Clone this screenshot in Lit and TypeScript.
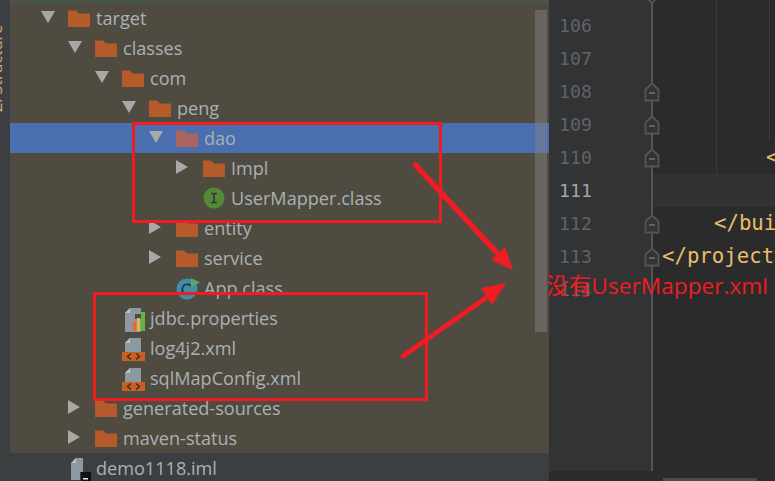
import { LitElement, html, css, svg } from "lit";
import { customElement } from "lit/decorators.js";

type Kind = "folder" | "iface" | "cls" | "props" | "xml" | "iml";
interface Node { name: string; depth: number; kind: Kind; arrow?: "open" | "closed"; selected?: boolean; plain?: boolean }

const TREE: Node[] = [
  { name: "target", depth: 0, kind: "folder", arrow: "open" },
  { name: "classes", depth: 1, kind: "folder", arrow: "open" },
  { name: "com", depth: 2, kind: "folder", arrow: "open" },
  { name: "peng", depth: 3, kind: "folder", arrow: "open" },
  { name: "dao", depth: 4, kind: "folder", arrow: "open", selected: true },
  { name: "Impl", depth: 5, kind: "folder", arrow: "closed" },
  { name: "UserMapper.class", depth: 5, kind: "iface" },
  { name: "entity", depth: 4, kind: "folder", arrow: "closed" },
  { name: "service", depth: 4, kind: "folder", arrow: "closed" },
  { name: "App.class", depth: 4, kind: "cls" },
  { name: "jdbc.properties", depth: 2, kind: "props" },
  { name: "log4j2.xml", depth: 2, kind: "xml" },
  { name: "sqlMapConfig.xml", depth: 2, kind: "xml" },
  { name: "generated-sources", depth: 1, kind: "folder", arrow: "closed" },
  { name: "maven-status", depth: 1, kind: "folder", arrow: "closed" },
  { name: "demo1118.iml", depth: 0, kind: "iml", plain: true },
];

interface Line { n?: number; code?: string; pad?: number; fold?: "mark" | "end"; guides: number; current?: boolean }
const LINES: Line[] = [
  { n: 105, guides: 2, fold: "end" },
  { n: 106, guides: 2 },
  { n: 107, guides: 2 },
  { n: 108, guides: 2, fold: "mark" },
  { n: 109, guides: 2, fold: "mark" },
  { n: 110, guides: 1, fold: "mark", code: "<", pad: 113 },
  { n: 111, guides: 0, current: true },
  { n: 112, guides: 0, fold: "mark", code: "</build>", pad: 61 },
  { n: 113, guides: 0, fold: "mark", code: "</project>", pad: 9 },
  { n: 114, guides: 0 },
  { guides: 0 },
  { guides: 0 },
  { guides: 0 },
  { guides: 0 },
  { guides: 0 },
];

const icon = (k: Kind) => {
  switch (k) {
    case "folder":
      return svg`<svg viewBox="0 0 22 17" width="22" height="17"><path d="M0 0.5h8l3 3h11v13.5H0z" fill="currentColor"/></svg>`;
    case "iface":
      return svg`<svg viewBox="0 0 22 22" width="22" height="22"><circle cx="11" cy="11" r="10.5" fill="#528a38"/><path d="M8 6.5h6M8 15.5h6M11 6.5v9" stroke="#2f3b2a" stroke-width="1.6" fill="none"/></svg>`;
    case "cls":
      return svg`<svg viewBox="0 0 24 24" width="24" height="24"><circle cx="11" cy="13" r="10.5" fill="#3f8fa8"/><path d="M15 10a5 5 0 1 0 0 6.5" stroke="#2b3a40" stroke-width="2" fill="none"/><path d="M15 2l9 4.5-9 4.5z" fill="#59a869"/></svg>`;
    case "props":
      return svg`<svg viewBox="0 0 23 28" width="23" height="28"><path d="M8 4h11v6h-6v18H3V9z" fill="#8d99a1"/><path d="M8 4v5H3z" fill="#b9c1c6"/><path d="M11 15h8v13h-8z" fill="#8d99a1"/><rect x="11" y="18" width="3" height="9" fill="#f26522"/><rect x="15" y="14" width="3" height="13" fill="#f4af3d"/><rect x="19" y="8" width="4" height="19" fill="#62b543"/></svg>`;
    case "xml":
      return svg`<svg viewBox="0 0 23 26" width="23" height="26"><path d="M8 3h11v14H3V8z" fill="#8d99a1"/><path d="M8 3v5H3z" fill="#b9c1c6"/><rect y="17" width="23" height="9" fill="#c75f27"/><path d="M9 18.5l-3.5 3 3.5 3M14 18.5l3.5 3-3.5 3" stroke="#3a2c20" stroke-width="1.4" fill="none"/></svg>`;
    case "iml":
      return svg`<svg viewBox="0 0 23 26" width="23" height="26"><path d="M8 3h7v14h-3v8H3V8z" fill="#8d99a1"/><path d="M8 3v5H3z" fill="#b9c1c6"/><rect x="13" y="17" width="10" height="9" fill="#111"/><rect x="15" y="23" width="5" height="1.5" fill="#eee"/></svg>`;
  }
};

@customElement("app-root")
export class AppRoot extends LitElement {
  static styles = css`
    :host { display: flex; width: 775px; height: 481px; overflow: hidden; position: relative; background: #2b2b2b; font-family: "Open Sans", "Noto Sans", sans-serif; }
    .rail { width: 10px; flex: none; background: #3c3f41; position: relative; overflow: hidden; }
    .rail span { position: absolute; left: -14px; top: 14px; writing-mode: vertical-rl; transform: rotate(180deg); font-size: 16px; line-height: 20px; color: #d6a870; white-space: nowrap; height: 98px; text-align: left; }
    .panel { width: 539px; flex: none; background: #504b40; display: flex; flex-direction: column; position: relative; }
    .strip { height: 3px; background: #485547; flex: none; }
    .row { height: 30px; flex: none; display: flex; align-items: center; font-size: 18.1px; color: #a9b1b6; white-space: nowrap; }
    .row.sel { background: #4b6eaf; }
    .row.plain { background: #3c3f41; }
    .arrow { width: 27px; flex: none; display: flex; justify-content: flex-start; color: #a8a8a8; margin-bottom: 2px; }
    .icon { width: 28px; flex: none; display: flex; align-items: center; color: #b45a2b; }
    .sel .icon { color: #a9665c; }
    .scroll { position: absolute; right: 2px; top: 10px; width: 12px; height: 322px; background: rgba(130,130,130,.5); }
    .editor { flex: 1; min-width: 0; display: flex; flex-direction: column; margin-top: -24.5px; font-family: "DejaVu Sans Mono", "Liberation Mono", monospace; }
    .line { height: 33px; flex: none; display: flex; }
    .gutter { width: 104px; flex: none; box-sizing: border-box; background: #313335; border-right: 2px solid #555; position: relative; padding-left: 10px; font-size: 18.2px; line-height: 33px; color: #606366; }
    .current .gutter { color: #a4a3a3; }
    .fold { position: absolute; right: -9px; top: 7px; }
    .foldend { position: absolute; right: -6px; bottom: 5px; }
    .code { flex: 1; min-width: 0; position: relative; font-size: 20.7px; line-height: 33px; color: #e8bf6a; white-space: pre; overflow: hidden; }
    .current .code { background: #323232; }
    .g1, .g2 { position: absolute; top: 0; bottom: 0; width: 1px; background: #3b3b3b; }
    .g1 { left: 63px; }
    .g2 { left: 116px; }
    .hbar { position: absolute; left: 663px; bottom: 0; width: 94px; height: 3px; background: #4b4b4b; }
    .marks { position: absolute; left: 0; top: 0; pointer-events: none; }
    .note { position: absolute; left: 546px; top: 270px; color: #f01c24; font-size: 22.7px; line-height: 32px; white-space: nowrap; font-family: "Open Sans", "Noto Sans CJK SC", sans-serif; }
  `;

  private row(n: Node) {
    const cls = `row${n.selected ? " sel" : ""}${n.plain ? " plain" : ""}`;
    return html`<div class=${cls} style="padding-left:${31 + n.depth * 27}px">
      <span class="arrow">${n.arrow === "open"
        ? svg`<svg viewBox="0 0 14 12" width="14" height="12"><path d="M0 0h14L7 12z" fill="currentColor"/></svg>`
        : n.arrow === "closed"
        ? svg`<svg viewBox="0 0 12 14" width="12" height="14"><path d="M0 0l12 7-12 7z" fill="currentColor"/></svg>`
        : ""}</span>
      <span class="icon">${icon(n.kind)}</span>
      <span>${n.name}</span>
    </div>`;
  }

  private line(l: Line) {
    return html`<div class="line ${l.current ? "current" : ""}">
      <div class="gutter">${l.n ?? ""}
        ${l.fold === "mark"
          ? svg`<svg class="fold" viewBox="0 0 16 20" width="16" height="20"><path d="M1.5 7.5L8 1.5l6.5 6v11h-13z" fill="#313335" stroke="#555" stroke-width="1.8"/><path d="M5 11h6" stroke="#777" stroke-width="1.4"/></svg>`
          : l.fold === "end"
          ? svg`<svg class="foldend" viewBox="0 0 10 5" width="10" height="5"><path d="M1 0l4 4 4-4" fill="#313335" stroke="#555" stroke-width="1.6"/></svg>`
          : ""}
      </div>
      <div class="code" style="padding-left:${l.pad ?? 0}px">${l.guides > 0 ? html`<i class="g1"></i>` : ""}${l.guides > 1 ? html`<i class="g2"></i>` : ""}${l.code ?? ""}</div>
    </div>`;
  }

  render() {
    return html`
      <div class="rail"><span>Z: Structure</span></div>
      <div class="panel">
        <div class="strip"></div>
        ${TREE.map((n) => this.row(n))}
        <div class="scroll"></div>
      </div>
      <div class="editor">${LINES.map((l) => this.line(l))}</div>
      <div class="hbar"></div>
      <svg class="marks" width="775" height="481" viewBox="0 0 775 481">
        <g fill="none" stroke="#f01c24" stroke-width="3">
          <rect x="133.5" y="123.5" width="307" height="98"/>
          <rect x="94.5" y="293.5" width="332" height="106"/>
        </g>
        <g fill="none" stroke="#f01c24" stroke-linecap="round">
          <path d="M415.5 165L499 255" stroke-width="5.5"/>
          <path d="M403 356L490 295" stroke-width="4.8"/>
        </g>
        <path d="M513 270L491 260L505 247z" fill="#f01c24"/>
        <path d="M506 283L481 288L492 305z" fill="#f01c24"/>
      </svg>
      <div class="note">没有UserMapper.xml</div>
    `;
  }
}
